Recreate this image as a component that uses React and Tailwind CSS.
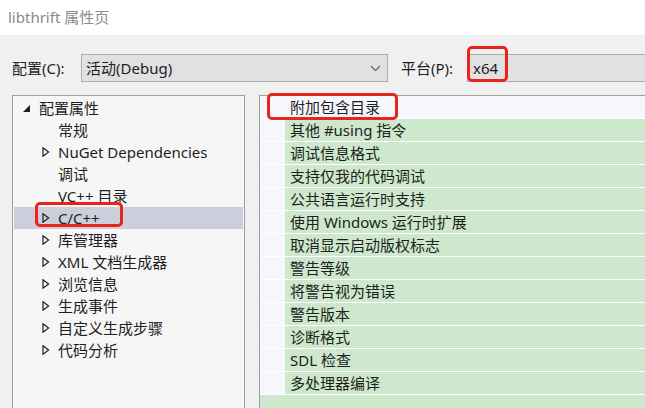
import React from 'react'

const FONT = { fontFamily: '"Segoe UI", "Noto Sans", "Noto Sans CJK SC", sans-serif' };

const treeItems = [
  { label: '常规', arrow: false },
  { label: 'NuGet Dependencies', arrow: true },
  { label: '调试', arrow: false },
  { label: 'VC++ 目录', arrow: false },
  { label: 'C/C++', arrow: true, selected: true },
  { label: '库管理器', arrow: true },
  { label: 'XML 文档生成器', arrow: true },
  { label: '浏览信息', arrow: true },
  { label: '生成事件', arrow: true },
  { label: '自定义生成步骤', arrow: true },
  { label: '代码分析', arrow: true },
];

const props = [
  '其他 #using 指令',
  '调试信息格式',
  '支持仅我的代码调试',
  '公共语言运行时支持',
  '使用 Windows 运行时扩展',
  '取消显示启动版权标志',
  '警告等级',
  '将警告视为错误',
  '警告版本',
  '诊断格式',
  'SDL 检查',
  '多处理器编译',
];

const Outline = () => (
  <svg width="8" height="10" viewBox="0 0 8 10" className="shrink-0">
    <path d="M1 0.8 L6.6 5 L1 9.2 Z" fill="none" stroke="#1e1e1e" strokeWidth="1.2" strokeLinejoin="miter" />
  </svg>
);

const RedBox = ({ className }) => (
  <div className={`absolute border-[3px] border-[#e8251c] rounded-[5px] pointer-events-none ${className}`} />
);

const App = () => {
  return (
    <div className="w-[645px] h-[408px] overflow-hidden bg-[#f0f0f0] text-[15px] text-[#1e1e1e]" style={FONT}>
      {/* title bar */}
      <div className="h-[35px] bg-white flex items-center pl-[8px] text-[#8a8a8a]">
        libthrift 属性页
      </div>

      {/* config / platform row */}
      <div className="flex items-center pl-[12px] pt-[19px]">
        <div className="w-[69px] leading-none">配置(C):</div>
        <div className="w-[307px] h-[28px] bg-[#e1e1e1] border border-[#adadad] flex items-center pl-[4px] pr-[6px]">
          <span className="flex-1 leading-none">活动(Debug)</span>
          <svg width="11" height="7" viewBox="0 0 11 7">
            <path d="M1 1 L5.5 5.5 L10 1" fill="none" stroke="#606060" strokeWidth="1.1" />
          </svg>
        </div>
        <div className="ml-[13px] w-[66px] leading-none">平台(P):</div>
        <div className="flex-1 h-[28px] bg-[#e1e1e1] border border-r-0 border-[#adadad] flex items-center pl-[5px]">
          <span className="relative leading-none">
            x64
            <RedBox className="-left-[6px] -top-[15px] w-[41px] h-[36px]" />
          </span>
        </div>
      </div>

      {/* panels */}
      <div className="flex mt-[13px] h-[400px]">
        {/* tree */}
        <div className="ml-[12px] w-[233px] bg-[#f6f6f6] border border-[#a0a0a0] pt-[1px] px-[1px]">
          <div className="h-[22px] flex items-center pl-[9px] gap-[9px]">
            <svg width="7" height="7" viewBox="0 0 7 7" className="shrink-0">
              <path d="M7 0 L7 7 L0 7 Z" fill="#1e1e1e" />
            </svg>
            <span className="leading-none">配置属性</span>
          </div>
          {treeItems.map((it) => (
            <div
              key={it.label}
              className={`relative h-[22px] flex items-center pl-[28px] ${it.selected ? 'bg-[#cccedb]' : ''}`}
            >
              <div className="w-[16px] flex items-center">{it.arrow && <Outline />}</div>
              <span className="leading-none whitespace-nowrap">{it.label}</span>
              {it.selected && <RedBox className="left-[21px] -top-[5px] w-[88px] h-[25px]" />}
            </div>
          ))}
        </div>

        {/* property grid */}
        <div className="ml-[14px] flex-1 bg-[#cde8cd] border-t border-l border-[#a0a0a0] flex flex-col">
          <div className="relative h-[23px] flex bg-[#f5f7fd] border-b border-white">
            <div className="w-[25px] shrink-0" />
            <div className="flex items-center pl-[5px] leading-none">附加包含目录</div>
            <RedBox className="left-[7px] -top-[3px] w-[131px] h-[27px]" />
          </div>
          {props.map((p) => (
            <div key={p} className="h-[23px] flex border-b border-white">
              <div className="w-[25px] shrink-0 bg-[#f5f7fd]" />
              <div className="flex-1 flex items-center pl-[5px] leading-none whitespace-nowrap bg-[#cde8cd]">{p}</div>
            </div>
          ))}
        </div>
      </div>
    </div>
  )
}

export default App;
